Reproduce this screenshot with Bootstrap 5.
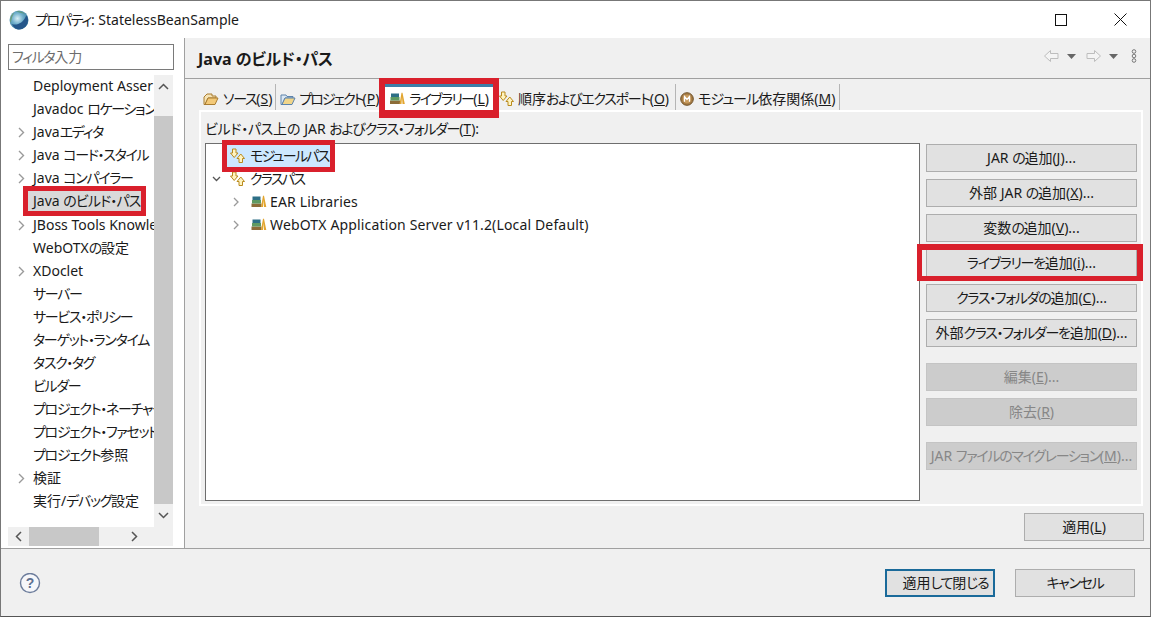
<!DOCTYPE html>
<html lang="ja">
<head>
<meta charset="utf-8">
<title>プロパティ</title>
<link href="https://cdn.jsdelivr.net/npm/bootstrap@5.3.0/dist/css/bootstrap.min.css" rel="stylesheet">
<style>
html,body{height:100%;overflow:hidden}
body{font-family:"Noto Sans","Noto Sans CJK JP",sans-serif;font-size:14px;line-height:20px;color:#1a1a1a;font-feature-settings:"palt";background:#fff}
.kn{letter-spacing:-1.3px}
.kw{letter-spacing:-1.7px}
.kx{letter-spacing:-2px}
.ks{letter-spacing:-.9px}
.kl{letter-spacing:-.3px}
.dlg{height:617px;border:1px solid #777;border-bottom-color:#555}
.ttl{height:37px;flex:none;padding-left:8px;gap:6px;background:#fff}
.ctl{width:46px;height:37px}
.ctl-max{margin-left:5px}
.ctl-close{margin:0 7px 0 7px}
.mainrow{height:510px;flex:none}
.side{width:184px;flex:none;border-right:1px solid #a0a0a0;padding:6px 10px 0 7px}
.flt{height:26px;border:1px solid #7a7a7a;padding:0 3px;line-height:24px;color:#6d6d6d;margin-bottom:5px}
.treewrap{height:452px}
.slist{width:146px;overflow:hidden;flex:none}
.srow{height:23px;line-height:22px;white-space:nowrap;padding-left:25px;position:relative}
.srow svg{position:absolute;left:10px;top:6px}
.sel-side{display:block;background:#d9d9d9;height:20px;line-height:20px;margin:1px 0 0 -5px;padding-left:5px;width:113px;outline:5px solid #d9202c;white-space:nowrap;overflow:hidden;position:relative;z-index:2}
.vsb{width:19px;background:#f0f0f0;flex:none}
.sbarrow{height:41px;flex:none}
.vthumb{height:388px;background:#c8c8c8;flex:none}
.hsb{height:19px;width:165px;background:#f0f0f0}
.hthumb{width:70px;height:19px;background:#c8c8c8;margin:0 13px 0 0}
.sbend{width:21px;flex:none}
.panel{background:#f0f0f0;min-width:0}
.phead{height:41px;flex:none;border-bottom:1px solid #a0a0a0;padding:1px 13px 0 13px}
.phead h1{font-size:16px;font-weight:700;margin:0;line-height:22px}
.phead svg{margin-bottom:6px}
.tabs{margin:5px 0 0 14px;height:26px;flex-wrap:nowrap;gap:0}
.tabx{padding:3px 4px 0;height:26px;line-height:23px;display:flex;align-items:center;gap:4px;color:#1a1a1a;white-space:nowrap}
.tabx:hover,.tabx:focus{color:#1a1a1a}
.tab-sep{border-right:1px solid #b5b5b5}
.tab1{padding-right:3px}
.tab2{gap:3px}
.tab4{padding-left:5px;padding-right:6px}
.tabx.on{background:#fff;border-top:3px solid #3c7fa8;box-shadow:0 0 0 6px #d9202c,0 2px 0 6px #d9202c;position:relative;z-index:2;margin-left:2px;padding-top:0;height:26px}
.tabc{margin:0 7px 0 14px;height:396px;border:2px solid #fff;padding:7px 4px 4px 4px;flex:none;background:#f0f0f0}
.cap{height:24px;line-height:20px}
.tree{width:715px;height:358px;background:#fff;border:1px solid #6e6e6e;flex:none}
.trow{height:23px;line-height:22px;white-space:nowrap;display:flex;align-items:center;gap:5px}
.ind0{padding-left:24px}.ind1{padding-left:6px}.ind2{padding-left:27px;gap:3px}
.chev-d{margin-right:3px}
.wide{letter-spacing:.15px}
.sel-tree{display:inline-flex;align-items:center;gap:5px;background:#cde8ff;height:22px;padding:0 1px 0 2px;outline:5px solid #d9202c;position:relative;z-index:2;margin-left:-3px;align-self:flex-end}
.btncol{width:211px;flex:none;margin-left:6px;padding-top:1px;gap:7px}
.wbtn{--bs-btn-padding-y:0;--bs-btn-padding-x:0;--bs-btn-font-size:14px;--bs-btn-line-height:26px;--bs-btn-border-radius:0;--bs-btn-bg:#e1e1e1;--bs-btn-border-color:#adadad;--bs-btn-color:#1a1a1a;--bs-btn-hover-bg:#e1e1e1;--bs-btn-hover-border-color:#adadad;--bs-btn-hover-color:#1a1a1a;height:28px;white-space:nowrap;flex:none;font-feature-settings:"palt"}
.wbtn.off,.wbtn.off:disabled{--bs-btn-disabled-bg:#cccccc;--bs-btn-disabled-border-color:#c4c4c4;--bs-btn-disabled-color:#878787;--bs-btn-disabled-opacity:1}
.redbtn{position:relative}
.redbtn::after{content:"";position:absolute;left:-10px;right:-7px;top:-6px;bottom:-5px;border:solid #d9202c;border-width:6px 6px 5px 5px;pointer-events:none}
.gap-a{margin-top:9px}.gap-b{margin-top:9px}
.applyrow{height:41px;padding:7px 6px 0 0;flex:none}
.w120{width:120px}.w110{width:110px}
.defbtn{--bs-btn-border-color:#1a6a9a;--bs-btn-hover-border-color:#1a6a9a;border-width:2px;--bs-btn-line-height:24px;padding-left:11px}
.foot{height:68px;flex:none;border-top:1px solid #a0a0a0;background:#f0f0f0;padding:20px 15px 0 18px}
.gap20{gap:20px}
</style>
</head>
<body>
<div class="dlg d-flex flex-column">
  <div class="ttl d-flex align-items-center">
    <svg width="20" height="20" viewBox="0 0 20 20"><defs><radialGradient id="g1" cx=".42" cy=".42" r=".6"><stop offset="0" stop-color="#d8eef5"/><stop offset=".5" stop-color="#6eaecb"/><stop offset="1" stop-color="#3c7f9f"/></radialGradient></defs><circle cx="10" cy="10" r="9.500" fill="url(#g1)"/><path d="M5 2.500C2 5 .5 9 1.500 13C2.500 11 2.500 8 3.500 6C4 5 5 3.500 5 2.500Z" fill="#6d9c74"/><path d="M7 1C10 .5 14 1.500 16 4C13 3 9 2.500 7 1Z" fill="#5f9a7f"/><path d="M3 14C8 16 14 13 17 6C18 5 19 8 19 10C19 15 15 19.500 10 19.500C7 19.500 4 17 3 14Z" fill="#24568a"/></svg>
    <span class="flex-grow-1"><span class="kn">プロパティ</span>: StatelessBeanSample</span>
    <span class="ctl ctl-max d-flex align-items-center justify-content-center"><svg width="12" height="12" viewBox="0 0 12 12"><rect x=".5" y=".5" width="11" height="11" fill="none" stroke="#111"/></svg></span>
    <span class="ctl ctl-close d-flex align-items-center justify-content-center"><svg width="13" height="13" viewBox="0 0 13 13"><path d="M.5.5l12 12M12.500.5l-12 12" stroke="#111" fill="none"/></svg></span>
  </div>
  <div class="mainrow d-flex">
    <div class="side d-flex flex-column">
      <div class="flt"><span class="kn">フィルタ</span>入力</div>
      <div class="treewrap d-flex">
        <div class="slist">
          <div class="srow">Deployment Asser</div>
          <div class="srow">Javadoc <span class="kn">ロケーション</span></div>
          <div class="srow"><svg width="7" height="11" viewBox="0 0 7 11"><path d="M1 1l4.500 4.500L1 10" fill="none" stroke="#9a9a9a" stroke-width="1.400"/></svg>Java<span class="kn">エディタ</span></div>
          <div class="srow"><svg width="7" height="11" viewBox="0 0 7 11"><path d="M1 1l4.500 4.500L1 10" fill="none" stroke="#9a9a9a" stroke-width="1.400"/></svg>Java <span class="kn">コード・スタイル</span></div>
          <div class="srow"><svg width="7" height="11" viewBox="0 0 7 11"><path d="M1 1l4.500 4.500L1 10" fill="none" stroke="#9a9a9a" stroke-width="1.400"/></svg>Java <span class="kn">コンパイラー</span></div>
          <div class="srow"><span class="sel-side">Java <span class="ks">のビルド・パス</span></span></div>
          <div class="srow"><svg width="7" height="11" viewBox="0 0 7 11"><path d="M1 1l4.500 4.500L1 10" fill="none" stroke="#9a9a9a" stroke-width="1.400"/></svg>JBoss Tools Knowle</div>
          <div class="srow">WebOTX<span class="kn">の</span>設定</div>
          <div class="srow"><svg width="7" height="11" viewBox="0 0 7 11"><path d="M1 1l4.500 4.500L1 10" fill="none" stroke="#9a9a9a" stroke-width="1.400"/></svg>XDoclet</div>
          <div class="srow"><span class="kn">サーバー</span></div>
          <div class="srow"><span class="kn">サービス・ポリシー</span></div>
          <div class="srow"><span class="kn">ターゲット・ランタイム</span></div>
          <div class="srow"><span class="kn">タスク・タグ</span></div>
          <div class="srow"><span class="kn">ビルダー</span></div>
          <div class="srow"><span class="kn">プロジェクト・ネーチャー</span></div>
          <div class="srow"><span class="kn">プロジェクト・ファセット</span></div>
          <div class="srow"><span class="kn">プロジェクト</span>参照</div>
          <div class="srow"><svg width="7" height="11" viewBox="0 0 7 11"><path d="M1 1l4.500 4.500L1 10" fill="none" stroke="#9a9a9a" stroke-width="1.400"/></svg>検証</div>
          <div class="srow">実行/<span class="kn">デバッグ</span>設定</div>
        </div>
        <div class="vsb d-flex flex-column">
          <div class="sbarrow d-flex justify-content-center pt-2"><svg width="11" height="7" viewBox="0 0 11 7"><path d="M1 6l4.500-4.500L10 6" fill="none" stroke="#555" stroke-width="1.500"/></svg></div>
          <div class="vthumb"></div>
          <div class="flex-grow-1 d-flex justify-content-center pt-2"><svg width="11" height="7" viewBox="0 0 11 7"><path d="M1 1l4.500 4.500L10 1" fill="none" stroke="#555" stroke-width="1.500"/></svg></div>
        </div>
      </div>
      <div class="hsb d-flex align-items-center">
        <div class="sbend d-flex justify-content-center"><svg width="7" height="11" viewBox="0 0 7 11"><path d="M6 1L1.500 5.500 6 10" fill="none" stroke="#555" stroke-width="1.500"/></svg></div>
        <div class="hthumb"></div>
        <div class="flex-grow-1 d-flex justify-content-center pe-3"><svg width="7" height="11" viewBox="0 0 7 11"><path d="M1 1l4.500 4.500L1 10" fill="none" stroke="#555" stroke-width="1.500"/></svg></div>
      </div>
    </div>
    <div class="panel flex-grow-1 d-flex flex-column">
      <div class="phead d-flex align-items-center justify-content-between">
        <h1>Java <span class="kl">のビルド・パス</span></h1>
        <svg width="93" height="14" viewBox="0 0 93 14"><path d="M.5 7l6-5.500v3h7.500v5H6.500v3z" fill="#f4f4f4" stroke="#bdbdbd"/><path d="M23 5h9l-4.500 5z" fill="#666"/><path d="M56.500 7l-6-5.500v3H43v5h7.500v3z" fill="#f4f4f4" stroke="#bdbdbd"/><path d="M65 5h9l-4.500 5z" fill="#666"/><circle cx="90" cy="2.500" r="1.800" fill="none" stroke="#777"/><circle cx="90" cy="7" r="1.800" fill="none" stroke="#777"/><circle cx="90" cy="11.500" r="1.800" fill="none" stroke="#777"/></svg>
      </div>
      <ul class="nav tabs d-flex">
        <li class="nav-item tab-sep"><a class="nav-link tabx tab1"><svg width="16" height="14" viewBox="0 0 16 14"><path d="M1 12.500V5l3-3h5v2h4v2H5l-3 6.500z" fill="#f5e3b5" stroke="#a97c30"/><path d="M2 12.500l3-6.500h10l-3 6.500z" fill="#f3c978" stroke="#a97c30"/></svg><span><span class="kn">ソース</span>(<u>S</u>)</span></a></li>
        <li class="nav-item"><a class="nav-link tabx tab2"><svg width="16" height="14" viewBox="0 0 16 14"><path d="M1 12.500V3h5l1 1.500h6V6H5l-3 6.500z" fill="#dbe7f3" stroke="#5c83ab"/><path d="M2 12.500L5 6h10l-3 6.500z" fill="#f1d589" stroke="#5c83ab"/></svg><span><span class="kx">プロジェクト</span>(<u>P</u>)</span></a></li>
        <li class="nav-item"><a class="nav-link tabx on"><svg width="16" height="13" viewBox="0 0 16 13"><use href="#books"/></svg><span><span class="kw">ライブラリー</span>(<u>L</u>)</span></a></li>
        <li class="nav-item tab-sep"><a class="nav-link tabx tab4"><svg width="16" height="16" viewBox="0 0 16 16"><use href="#arrows"/></svg><span>順序<span class="kn">およびエクスポート</span>(<u>O</u>)</span></a></li>
        <li class="nav-item tab-sep"><a class="nav-link tabx"><svg width="14" height="14" viewBox="0 0 14 14"><circle cx="7" cy="7" r="6.300" fill="#a67c45" stroke="#6f5128"/><circle cx="7" cy="7" r="4.200" fill="#c79a5c"/><path d="M4.500 9.700V4.500L7 7.500 9.500 4.500v5.200" fill="none" stroke="#fff" stroke-width="1.300"/></svg><span><span class="ks">モジュール</span>依存関係(<u>M</u>)</span></a></li>
      </ul>
      <div class="tabc">
        <div class="cap"><span class="kl">ビルド・パス</span>上の JAR <span class="kn">およびクラス・フォルダー</span>(<u>T</u>):</div>
        <div class="d-flex">
          <div class="tree">
            <div class="trow ind0"><span class="sel-tree"><svg width="16" height="16" viewBox="0 0 16 16"><use href="#arrows"/></svg><span class="kw">モジュールパス</span></span></div>
            <div class="trow ind1"><svg width="9" height="6" viewBox="0 0 9 6" class="chev-d"><path d="M1 1l3.500 3.500L8 1" fill="none" stroke="#555" stroke-width="1.300"/></svg><svg width="16" height="16" viewBox="0 0 16 16"><use href="#arrows"/></svg><span class="kw">クラスパス</span></div>
            <div class="trow ind2"><svg width="6" height="10" viewBox="0 0 6 10" class="me-2"><path d="M1 1l4 4-4 4" fill="none" stroke="#9a9a9a" stroke-width="1.300"/></svg><svg width="17" height="13" viewBox="0 0 16 13"><use href="#books"/></svg><span class="wide">EAR Libraries</span></div>
            <div class="trow ind2"><svg width="6" height="10" viewBox="0 0 6 10" class="me-2"><path d="M1 1l4 4-4 4" fill="none" stroke="#9a9a9a" stroke-width="1.300"/></svg><svg width="17" height="13" viewBox="0 0 16 13"><use href="#books"/></svg><span class="wide">WebOTX Application Server v11.2(Local Default)</span></div>
          </div>
          <div class="btncol d-flex flex-column">
            <button class="btn wbtn">JAR <span class="kn">の</span>追加(<u>J</u>)...</button>
            <button class="btn wbtn">外部 JAR <span class="kn">の</span>追加(<u>X</u>)...</button>
            <button class="btn wbtn">変数<span class="kn">の</span>追加(<u>V</u>)...</button>
            <button class="btn wbtn redbtn"><span class="kn">ライブラリーを</span>追加(<u>i</u>)...</button>
            <button class="btn wbtn"><span class="kn">クラス・フォルダの</span>追加(<u>C</u>)...</button>
            <button class="btn wbtn">外部<span class="kn">クラス・フォルダーを</span>追加(<u>D</u>)...</button>
            <button class="btn wbtn off gap-a" disabled>編集(<u>E</u>)...</button>
            <button class="btn wbtn off" disabled>除去(<u>R</u>)</button>
            <button class="btn wbtn off gap-b" disabled>JAR <span class="kn">ファイルのマイグレーション</span>(<u>M</u>)...</button>
          </div>
        </div>
      </div>
      <div class="applyrow d-flex justify-content-end"><button class="btn wbtn w120">適用(<u>L</u>)</button></div>
    </div>
  </div>
  <div class="foot d-flex justify-content-between">
    <svg width="22" height="22" viewBox="0 0 22 22" class="mt-1"><circle cx="11" cy="10" r="9.500" fill="#f6f7fa" stroke="#6d7d9c" stroke-width="1.400"/><text x="11" y="15" text-anchor="middle" font-family="Liberation Sans" font-weight="700" font-size="14" fill="#5d6f90">?</text></svg>
    <div class="d-flex gap20">
      <button class="btn wbtn w110 defbtn">適用<span class="kn">して</span>閉<span class="kn">じる</span></button>
      <button class="btn wbtn w120"><span class="kn">キャンセル</span></button>
    </div>
  </div>
</div>
<svg width="0" height="0" class="d-block" aria-hidden="true"><defs>
  <g id="books"><rect x="1" y="8.500" width="10" height="3.500" fill="#8c6c38"/><rect x="1.500" y="5" width="9" height="3.500" fill="#5f9a62"/><rect x="2" y="1.500" width="8" height="3.500" fill="#2d6f86"/><path d="M10.500 12L12.500 .8h1L15.800 12h-2.300L13 5 12.500 12z" fill="#e2a52f"/></g>
  <g id="arrows"><path d="M3.500 1h3.500v4h2L5.200 9.500 1.500 5h2z" fill="#fff4c0" stroke="#b98a1e"/><path d="M10 14.500v-4H8L11.800 6l3.700 4.500h-2v4z" fill="#fff4c0" stroke="#b98a1e"/></g>
</defs></svg>
<script src="https://cdn.jsdelivr.net/npm/bootstrap@5.3.0/dist/js/bootstrap.bundle.min.js"></script>
</body>
</html>
